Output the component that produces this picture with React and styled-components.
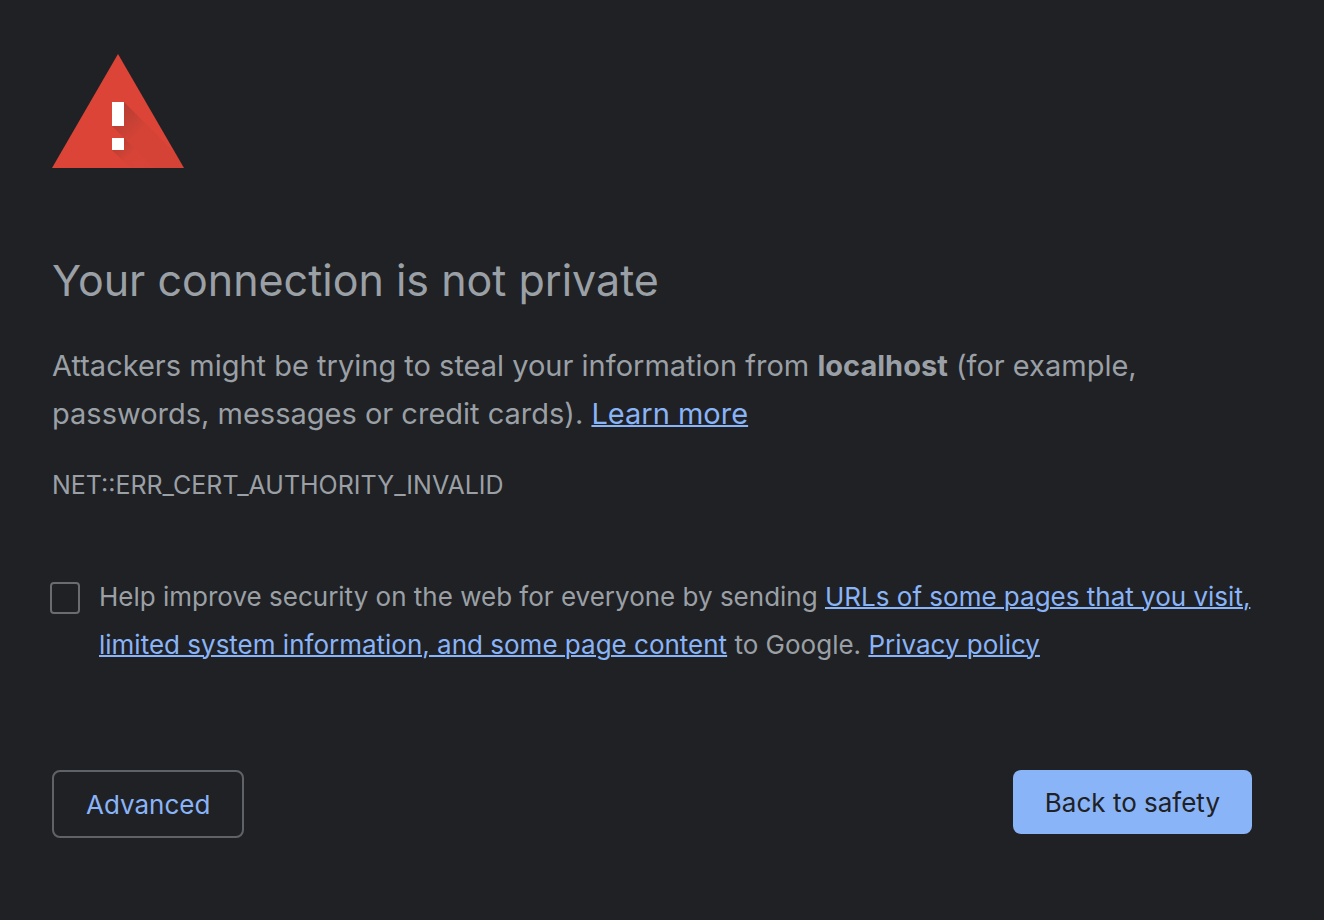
import React from "react";
import styled, { createGlobalStyle } from "styled-components";

export default function App() {
  return (
    <>
      <GlobalStyle />
      <Page>
        <WarningIcon viewBox="0 0 132 114" aria-hidden="true">
          <defs>
            <linearGradient id="barShade" x1="64" y1="58" x2="86" y2="80" gradientUnits="userSpaceOnUse">
              <stop offset="0" stopColor="#3e2723" stopOpacity="0.24" />
              <stop offset="1" stopColor="#3e2723" stopOpacity="0.04" />
            </linearGradient>
            <linearGradient id="dotShade" x1="66" y1="90" x2="78" y2="102" gradientUnits="userSpaceOnUse">
              <stop offset="0" stopColor="#3e2723" stopOpacity="0.2" />
              <stop offset="1" stopColor="#3e2723" stopOpacity="0.02" />
            </linearGradient>
          </defs>
          <path d="M66 0 132 114H0Z" fill="#db4437" />
          <path d="M72 48 124 100 132 114H102L60 72Z" fill="url(#barShade)" />
          <path d="M72 84 102 114H78L60 96Z" fill="url(#dotShade)" />
          <path d="M60 48H72V72H60ZM60 84H72V96H60Z" fill="#fff" />
        </WarningIcon>

        <Title>Your connection is not private</Title>
        <Message>
          Attackers might be trying to steal your information from{" "}
          <strong>localhost</strong> (for example, passwords, messages or credit
          cards). <Link href="#learn-more">Learn more</Link>
        </Message>
        <ErrorCode>NET::ERR_CERT_AUTHORITY_INVALID</ErrorCode>

        <OptIn>
          <Checkbox type="checkbox" id="opt-in" />
          <OptInLabel htmlFor="opt-in">
            Help improve security on the web for everyone by sending{" "}
            <Link href="#details">
              URLs of some pages that you visit, limited system information, and
              some page content
            </Link>{" "}
            to Google. <Link href="#privacy">Privacy policy</Link>
          </OptInLabel>
        </OptIn>

        <Actions>
          <SecondaryButton type="button">Advanced</SecondaryButton>
          <PrimaryButton type="button">Back to safety</PrimaryButton>
        </Actions>
      </Page>
    </>
  );
}

const GlobalStyle = createGlobalStyle`
  * {
    box-sizing: border-box;
  }
  body {
    margin: 0;
    background: #202124;
    color: #9aa0a6;
    font-family: Inter, sans-serif;
  }
`;

const Page = styled.main`
  max-width: 1324px;
  margin: 0 auto;
  padding: 54px 72px 82px 52px;
`;

const WarningIcon = styled.svg`
  display: block;
  width: 132px;
  height: 114px;
`;

const Title = styled.h1`
  margin: 82px 0 32px;
  font-size: 43px;
  font-weight: 400;
  line-height: 60px;
`;

const Message = styled.p`
  margin: 0;
  font-size: 29px;
  line-height: 48px;
`;

const ErrorCode = styled.p`
  margin: 32px 0 73px;
  font-size: 25px;
  line-height: 30px;
`;

const Link = styled.a`
  color: #8ab4f8;
  text-decoration: underline;
  text-decoration-thickness: 2px;
`;

const OptIn = styled.div`
  display: flex;
  align-items: flex-start;
  gap: 19px;
  margin-left: -2px;
`;

const Checkbox = styled.input`
  appearance: none;
  flex: none;
  width: 30px;
  height: 32px;
  margin: 9px 0 0;
  border: 2px solid #6b6c6f;
  border-radius: 4px;
  cursor: pointer;
  &:checked {
    background: #8ab4f8;
  }
`;

const OptInLabel = styled.label`
  font-size: 26px;
  line-height: 48px;
`;

const Actions = styled.div`
  display: flex;
  justify-content: space-between;
  align-items: flex-start;
  margin-top: 101px;
`;

const Button = styled.button`
  padding: 0 32px;
  border: none;
  border-radius: 8px;
  font-family: inherit;
  font-size: 26px;
  cursor: pointer;
`;

const PrimaryButton = styled(Button)`
  height: 64px;
  background: #8ab4f8;
  color: #202124;
`;

const SecondaryButton = styled(Button)`
  height: 68px;
  border: 2px solid #5f6368;
  background: transparent;
  color: #8ab4f8;
`;
